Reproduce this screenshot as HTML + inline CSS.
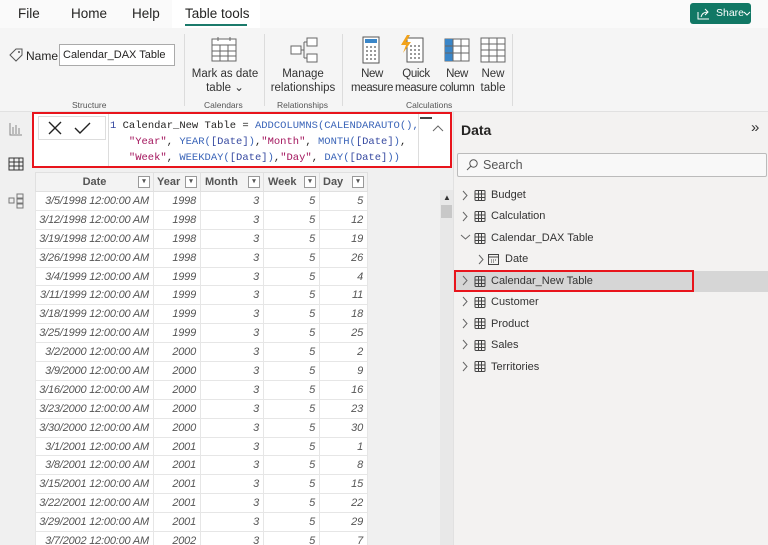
<!DOCTYPE html><html><head><style>
*{box-sizing:border-box;margin:0;padding:0}
html,body{width:768px;height:545px;overflow:hidden}
body{background:#f0f0f0;font-family:"Liberation Sans",sans-serif;color:#252423;position:relative;font-size:12px}
.a{position:absolute;white-space:nowrap}
.tab{position:absolute;top:6px;font-size:13.5px}
.rib{position:absolute;left:0;top:28px;width:768px;height:84px;background:#f5f5f5;border-bottom:1px solid #e1e1e1}
.lbl{position:absolute;font-size:11.5px;text-align:center;line-height:14px;color:#333;white-space:nowrap}
.grp{position:absolute;top:100px;font-size:8.5px;color:#555;text-align:center}
.sep{position:absolute;top:34px;width:1px;height:72px;background:#dcdcdc}
table{border-collapse:collapse;position:absolute;left:35px;top:172px;font-size:11px;font-style:italic;color:#555;table-layout:fixed;width:332px}
td{border:1px solid #e6e6e6;background:#fff;height:18.9px;text-align:right;padding:0 4px 0 0;white-space:nowrap;overflow:hidden;line-height:12px;vertical-align:middle;letter-spacing:-0.2px}
th{background:#f3f3f3;border:1px solid #e0e0e0;height:19px;font-style:normal;font-weight:bold;color:#555;font-size:11px;text-align:left;position:relative;white-space:nowrap}
th i{position:absolute;right:3px;top:3px;width:12px;height:12px;border:1px solid #999;background:#fff;font-style:normal;font-size:7px;line-height:10px;text-align:center}
.code{font-family:"Liberation Mono",monospace;font-size:10.5px;line-height:16px}
.k{color:#3a64b8}.s{color:#a3155d}.d{color:#3548a0}
.item{position:absolute;left:491px;font-size:11px;color:#333;white-space:nowrap}
</style></head><body>
<div class="a" style="left:0;top:0;width:768px;height:28px;background:#fafafa"></div>
<div class="tab" style="left:18px">File</div>
<div class="tab" style="left:71px">Home</div>
<div class="tab" style="left:132px">Help</div>
<div class="a" style="left:172px;top:0;width:88px;height:28px;background:#fff"></div>
<div class="tab" style="left:185px">Table tools</div>
<div class="a" style="left:185px;top:24px;width:62px;height:2px;background:#1b7a6b"></div>
<div class="a" style="left:690px;top:3px;width:61px;height:21px;background:#117865;border-radius:3px"></div>
<div class="a" style="left:716px;top:7px;color:#fff;font-size:10.5px;line-height:13px">Share</div>
<svg class="a" style="left:697px;top:8px" width="14" height="12"><path d="M1 4v7h11M4 9c1-4 4-5 7-5M8 1l3 3-3 3" stroke="#fff" fill="none"/></svg>
<svg class="a" style="left:743px;top:11px" width="8" height="6"><path d="M1 1l3 3 3-3" stroke="#fff" fill="none"/></svg>
<div class="rib"></div>
<svg class="a" style="left:8px;top:48px" width="16" height="14"><path d="M2 7l6-6h6v6l-6 6z" stroke="#555" fill="none"/><circle cx="11" cy="4" r="1" fill="#555"/></svg>
<div class="a" style="left:26px;top:49px;font-size:12px">Name</div>
<div class="a" style="left:59px;top:44px;width:116px;height:22px;background:#fff;border:1px solid #aaa;font-size:11px;padding:4px 3px">Calendar_DAX Table</div>
<div class="grp" style="left:72px">Structure</div>
<div class="sep" style="left:184px"></div>
<svg class="a" style="left:211px;top:36px" width="26" height="26"><rect x="1" y="3" width="24" height="22" fill="#fff" stroke="#666"/><path d="M1 9h24M1 15h24M1 20h24M9 9v16M17 9v16M7 1v4M19 1v4" stroke="#666"/></svg>
<div class="lbl" style="left:186px;top:67px;width:78px">Mark as date<br>table ⌄</div>
<div class="grp" style="left:204px">Calendars</div>
<div class="sep" style="left:264px"></div>
<svg class="a" style="left:290px;top:37px" width="28" height="26"><rect x="1" y="9" width="10" height="8" fill="#fff" stroke="#666"/><rect x="17" y="1" width="10" height="8" fill="#fff" stroke="#666"/><rect x="17" y="17" width="10" height="8" fill="#fff" stroke="#666"/><path d="M11 13h3M14 5v16M14 5h3M14 21h3" stroke="#666" fill="none"/></svg>
<div class="lbl" style="left:268px;top:67px;width:70px">Manage<br>relationships</div>
<div class="grp" style="left:277px">Relationships</div>
<div class="sep" style="left:342px"></div>
<svg class="a" style="left:362px;top:36px" width="18" height="28"><rect x="1" y="1" width="16" height="26" fill="#fff" stroke="#555"/><rect x="3" y="3" width="12" height="4" fill="#3a86c8"/><path d="M4 11h2M8 11h2M12 11h2M4 15h2M8 15h2M12 15h2M4 19h2M8 19h2M12 19h2M4 23h2M8 23h2M12 23h2" stroke="#333"/></svg>
<div class="lbl" style="left:350px;top:67px;width:44px;letter-spacing:-0.4px">New<br>measure</div>
<svg class="a" style="left:399px;top:34px" width="26" height="30"><rect x="8" y="4" width="16" height="24" fill="#fff" stroke="#555"/><path d="M11 12h2M15 12h2M19 12h2M11 16h2M15 16h2M19 16h2M11 20h2M15 20h2M19 20h2M11 24h2M15 24h2M19 24h2" stroke="#333"/><path d="M8 1l-6 10h5l-3 8 8-11h-5l4-7z" fill="#f2a31b"/></svg>
<div class="lbl" style="left:395px;top:67px;width:42px;letter-spacing:-0.4px">Quick<br>measure</div>
<svg class="a" style="left:444px;top:38px" width="26" height="24"><rect x="1" y="1" width="24" height="22" fill="#fff" stroke="#666"/><rect x="1" y="1" width="8" height="22" fill="#3a86c8"/><path d="M1 8h24M1 15h24M9 1v22M17 1v22" stroke="#666"/></svg>
<div class="lbl" style="left:437px;top:67px;width:40px;letter-spacing:-0.4px">New<br>column</div>
<svg class="a" style="left:480px;top:37px" width="26" height="26"><rect x="1" y="1" width="24" height="24" fill="#fff" stroke="#666"/><path d="M1 7h24M1 13h24M1 19h24M9 1v24M17 1v24" stroke="#666"/></svg>
<div class="lbl" style="left:476px;top:67px;width:34px">New<br>table</div>
<div class="grp" style="left:406px">Calculations</div>
<div class="sep" style="left:512px"></div>
<svg class="a" style="left:9px;top:122px" width="14" height="14"><path d="M1 1v12h12M4 5v7M7 3v9M10 6v6" stroke="#888" fill="none"/></svg>
<svg class="a" style="left:8px;top:157px" width="16" height="14"><rect x="1" y="1" width="14" height="12" fill="none" stroke="#333"/><path d="M1 5h14M1 9h14M6 1v12M11 1v12" stroke="#333"/></svg>
<svg class="a" style="left:8px;top:193px" width="16" height="16"><rect x="1" y="5" width="5" height="5" fill="none" stroke="#777"/><rect x="9" y="1" width="6" height="4" fill="none" stroke="#777"/><rect x="9" y="6" width="6" height="4" fill="none" stroke="#777"/><rect x="9" y="11" width="6" height="4" fill="none" stroke="#777"/></svg>
<div class="a" style="left:32px;top:112px;width:420px;height:56px;background:#fff;border:2.5px solid #e8141c"></div>
<div class="a" style="left:38px;top:116px;width:68px;height:24px;border:1px solid #ddd;background:#fff"></div>
<svg class="a" style="left:47px;top:121px" width="48" height="14"><path d="M2 1l12 12M14 1L2 13M28 7l5 5 10-10" stroke="#222" stroke-width="1.4" fill="none"/></svg>
<div class="a" style="left:108px;top:114px;width:1px;height:52px;background:#ddd"></div>
<div class="a" style="left:418px;top:114px;width:1px;height:52px;background:#ddd"></div>
<div class="a" style="left:420px;top:117px;width:12px;height:1.5px;background:#444"></div>
<svg class="a" style="left:432px;top:125px" width="12" height="7"><path d="M1 6l5-5 5 5" stroke="#666" fill="none"/></svg>
<div class="a code" style="left:110px;top:118px"><span style="color:#3548a0">1</span>&nbsp;Calendar_New Table = <span class="k">ADDCOLUMNS(CALENDARAUTO(),</span><br>&nbsp;&nbsp;&nbsp;<span class="s">"Year"</span>, <span class="k">YEAR(</span><span class="d">[Date]</span><span class="k">)</span>,<span class="s">"Month"</span>, <span class="k">MONTH(</span><span class="d">[Date]</span><span class="k">)</span>,<br>&nbsp;&nbsp;&nbsp;<span class="s">"Week"</span>, <span class="k">WEEKDAY(</span><span class="d">[Date]</span><span class="k">)</span>,<span class="s">"Day"</span>, <span class="k">DAY(</span><span class="d">[Date]</span><span class="k">))</span></div>
<table>
<colgroup><col style="width:118px"><col style="width:47px"><col style="width:63px"><col style="width:56px"><col style="width:48px"></colgroup>
<tr><th style="text-align:center">Date<i>▾</i></th><th style="padding-left:3px">Year<i>▾</i></th><th style="padding-left:4px">Month<i>▾</i></th><th style="padding-left:4px">Week<i>▾</i></th><th style="padding-left:3px">Day<i>▾</i></th></tr>
<tr><td>3/5/1998 12:00:00 AM</td><td>1998</td><td>3</td><td>5</td><td>5</td></tr>
<tr><td>3/12/1998 12:00:00 AM</td><td>1998</td><td>3</td><td>5</td><td>12</td></tr>
<tr><td>3/19/1998 12:00:00 AM</td><td>1998</td><td>3</td><td>5</td><td>19</td></tr>
<tr><td>3/26/1998 12:00:00 AM</td><td>1998</td><td>3</td><td>5</td><td>26</td></tr>
<tr><td>3/4/1999 12:00:00 AM</td><td>1999</td><td>3</td><td>5</td><td>4</td></tr>
<tr><td>3/11/1999 12:00:00 AM</td><td>1999</td><td>3</td><td>5</td><td>11</td></tr>
<tr><td>3/18/1999 12:00:00 AM</td><td>1999</td><td>3</td><td>5</td><td>18</td></tr>
<tr><td>3/25/1999 12:00:00 AM</td><td>1999</td><td>3</td><td>5</td><td>25</td></tr>
<tr><td>3/2/2000 12:00:00 AM</td><td>2000</td><td>3</td><td>5</td><td>2</td></tr>
<tr><td>3/9/2000 12:00:00 AM</td><td>2000</td><td>3</td><td>5</td><td>9</td></tr>
<tr><td>3/16/2000 12:00:00 AM</td><td>2000</td><td>3</td><td>5</td><td>16</td></tr>
<tr><td>3/23/2000 12:00:00 AM</td><td>2000</td><td>3</td><td>5</td><td>23</td></tr>
<tr><td>3/30/2000 12:00:00 AM</td><td>2000</td><td>3</td><td>5</td><td>30</td></tr>
<tr><td>3/1/2001 12:00:00 AM</td><td>2001</td><td>3</td><td>5</td><td>1</td></tr>
<tr><td>3/8/2001 12:00:00 AM</td><td>2001</td><td>3</td><td>5</td><td>8</td></tr>
<tr><td>3/15/2001 12:00:00 AM</td><td>2001</td><td>3</td><td>5</td><td>15</td></tr>
<tr><td>3/22/2001 12:00:00 AM</td><td>2001</td><td>3</td><td>5</td><td>22</td></tr>
<tr><td>3/29/2001 12:00:00 AM</td><td>2001</td><td>3</td><td>5</td><td>29</td></tr>
<tr><td>3/7/2002 12:00:00 AM</td><td>2002</td><td>3</td><td>5</td><td>7</td></tr>
</table>
<div class="a" style="left:440px;top:190px;width:13px;height:355px;background:#e8e8e8"></div>
<div class="a" style="left:443px;top:193px;font-size:8px;color:#333">▲</div>
<div class="a" style="left:441px;top:205px;width:11px;height:13px;background:#c8c8c8"></div>
<div class="a" style="left:453px;top:112px;width:315px;height:433px;background:#f3f2f1;border-left:1px solid #e1e1e1"></div>
<div class="a" style="left:461px;top:122px;font-size:14px;font-weight:bold;color:#252423">Data</div>
<div class="a" style="left:751px;top:119px;font-size:15px;color:#333">»</div>
<div class="a" style="left:457px;top:153px;width:310px;height:24px;border:1px solid #bbb;background:#f8f8f8;border-radius:2px"></div>
<svg class="a" style="left:466px;top:159px" width="12" height="12"><circle cx="7.5" cy="4.5" r="3.7" fill="none" stroke="#555"/><path d="M5 7L1 11" stroke="#555"/></svg>
<div class="a" style="left:483px;top:158px;font-size:12.5px;color:#555">Search</div>
<div class="a" style="left:454px;top:271px;width:314px;height:21px;background:#d6d6d6"></div>
<div class="a" style="left:454px;top:270px;width:240px;height:22px;border:2.5px solid #e8141c"></div>
<svg class="a" style="left:460px;top:190px" width="12" height="190"><g fill="none" stroke="#666">
<path d="M3 1l4 4.5-4 4.5"/><path d="M3 22l4 4.5-4 4.5"/><path d="M1 45l4.5 4 4.5-4"/><path d="M3 86l4 4.5-4 4.5"/><path d="M3 107l4 4.5-4 4.5"/><path d="M3 129l4 4.5-4 4.5"/><path d="M3 150l4 4.5-4 4.5"/><path d="M3 172l4 4.5-4 4.5"/></g></svg>
<svg class="a" style="left:477px;top:254px" width="8" height="12"><path d="M2 1l4 4.5-4 4.5" fill="none" stroke="#666"/></svg>
<div class="item" style="top:189px">Budget</div>
<div class="item" style="top:210px">Calculation</div>
<div class="item" style="top:232px">Calendar_DAX Table</div>
<div class="item" style="top:253px;left:505px">Date</div>
<div class="item" style="top:275px">Calendar_New Table</div>
<div class="item" style="top:296px">Customer</div>
<div class="item" style="top:318px">Product</div>
<div class="item" style="top:339px">Sales</div>
<div class="item" style="top:361px">Territories</div>
<svg class="a" style="left:474px;top:190px" width="12" height="190">
<g fill="none" stroke="#444"><g id="t"><rect x="1" y="0.5" width="10" height="10" rx="1"/><path d="M1 4h10M1 7.5h10M4.5 .5v10M7.5 .5v10"/></g>
<use href="#t" y="21"/><use href="#t" y="107"/><use href="#t" y="128"/><use href="#t" y="150"/><use href="#t" y="171"/>
<use href="#t" y="43"/><use href="#t" y="86"/></g></svg>
<svg class="a" style="left:488px;top:254px" width="11" height="11"><rect x="0.5" y="0.5" width="10" height="10" fill="none" stroke="#444"/><path d="M0.5 3h10M3 6h1M5 6h1M7 6h1M3 8h1M5 8h1" stroke="#444"/></svg>
</body></html>
